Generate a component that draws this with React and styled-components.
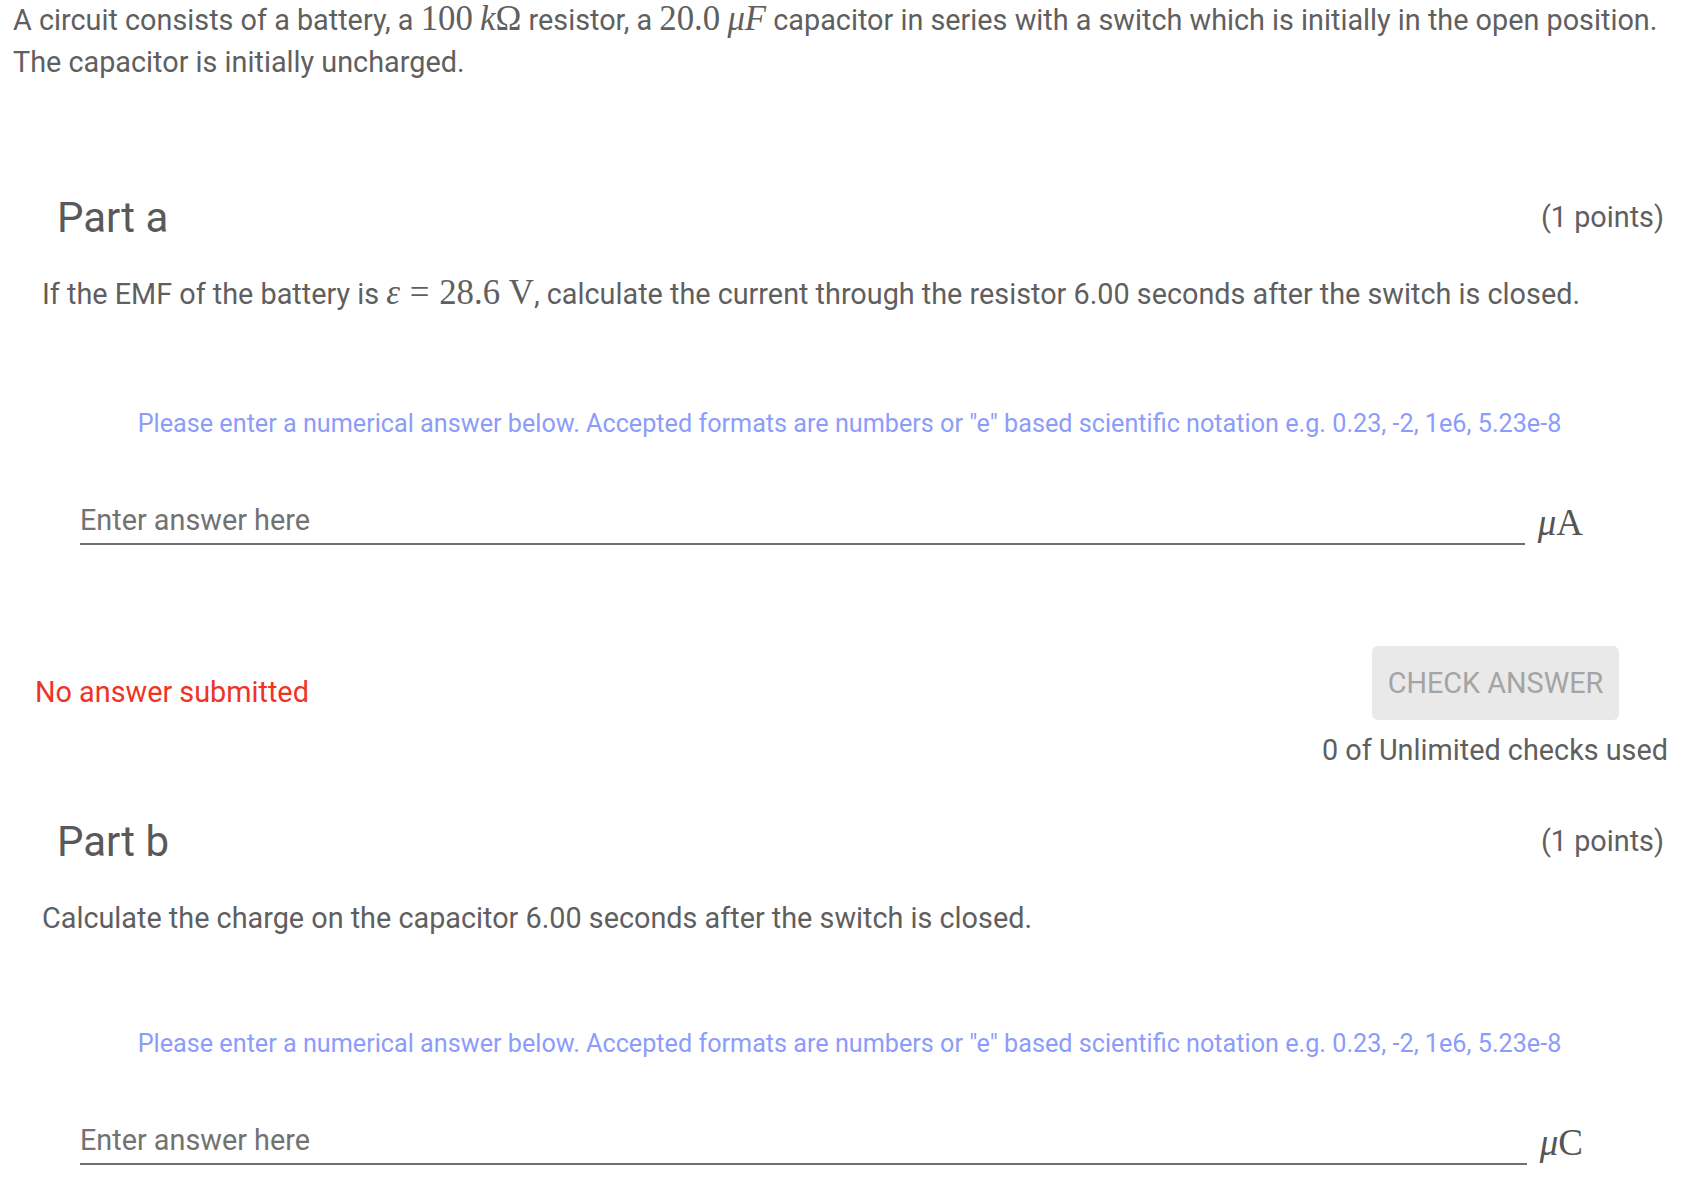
import React from 'react';
import styled, { createGlobalStyle } from 'styled-components';

const GlobalStyle = createGlobalStyle`
  html, body {
    margin: 0;
    padding: 0;
    background: #ffffff;
  }
  body {
    font-family: Roboto, 'Liberation Sans', sans-serif;
    color: #5f5f5f;
  }
`;

const Page = styled.div`
  padding: 0 0 0 13px;
  box-sizing: border-box;
  width: 1686px;
  min-height: 1202px;
`;

const Intro = styled.p`
  margin: -1px 0 0;
  font-size: 28.8px;
  line-height: 42px;
  white-space: nowrap;
`;

const Math = styled.span`
  font-family: 'Liberation Serif', 'DejaVu Serif', serif;
  font-size: 1.21em;
  line-height: 1;
  font-style: ${(p) => (p.$italic ? 'italic' : 'normal')};
`;

const Rel = styled.span`
  margin: 0 0.28em;
`;

const Part = styled.section`
  margin-top: ${(p) => p.$top}px;
`;

const PartHeader = styled.div`
  display: flex;
  justify-content: space-between;
  align-items: center;
  padding: 0 22px 0 44px;
  height: 50px;
`;

const PartTitle = styled.h2`
  margin: 0;
  font-size: 42px;
  font-weight: 400;
  color: #595959;
`;

const Points = styled.span`
  font-size: 28.8px;
  color: #5f5f5f;
`;

const Question = styled.p`
  margin: 31px 0 0;
  padding-left: 29px;
  font-size: 28.8px;
  line-height: 42px;
`;

const Hint = styled.p`
  margin: ${(p) => p.$gap}px 0 0;
  text-align: center;
  font-size: 25.2px;
  line-height: 34px;
  color: #8c9cfa;
`;

const AnswerRow = styled.div`
  display: flex;
  align-items: flex-end;
  gap: 13px;
  margin-top: 54px;
  padding: 0 103px 0 67px;
`;

const AnswerInput = styled.input`
  flex: 1;
  min-width: 0;
  border: none;
  border-bottom: 2px solid #6f6f6f;
  outline: none;
  background: transparent;
  padding: 8px 0 6px;
  font-family: Roboto, 'Liberation Sans', sans-serif;
  font-size: 28.8px;
  color: #5f5f5f;

  &::placeholder {
    color: #727272;
  }
`;

const Unit = styled.span`
  font-family: 'Liberation Serif', 'DejaVu Serif', serif;
  font-size: 37px;
  line-height: 1;
  color: #555555;
  padding-bottom: 4px;
`;

const SubmitRow = styled.div`
  display: flex;
  justify-content: space-between;
  align-items: center;
  margin-top: 101px;
  padding: 0 67px 0 22px;
`;

const Status = styled.span`
  font-size: 28.8px;
  color: #ef3325;
  margin-top: 18px;
`;

const CheckButton = styled.button`
  width: 247px;
  height: 74px;
  border: none;
  border-radius: 6px;
  background: #e9e9e9;
  color: #a4a4a4;
  font-family: Roboto, 'Liberation Sans', sans-serif;
  font-size: 28.8px;
  text-transform: uppercase;
  cursor: default;
`;

const ChecksUsed = styled.div`
  text-align: right;
  padding-right: 18px;
  margin-top: 9px;
  font-size: 28.8px;
  line-height: 42px;
  color: #5f5f5f;
`;

const hintText =
  'Please enter a numerical answer below. Accepted formats are numbers or "e" based scientific notation e.g. 0.23, -2, 1e6, 5.23e-8';

const PartBlock = ({ label, top, hintGap, question, unit, showSubmit }) => (
  <Part $top={top}>
    <PartHeader>
      <PartTitle>Part {label}</PartTitle>
      <Points>(1 points)</Points>
    </PartHeader>
    <Question>{question}</Question>
    <Hint $gap={hintGap}>{hintText}</Hint>
    <AnswerRow>
      <AnswerInput placeholder='Enter answer here' />
      <Unit>{unit}</Unit>
    </AnswerRow>
    {showSubmit && (
      <>
        <SubmitRow>
          <Status>No answer submitted</Status>
          <CheckButton disabled>Check Answer</CheckButton>
        </SubmitRow>
        <ChecksUsed>0 of Unlimited checks used</ChecksUsed>
      </>
    )}
  </Part>
);

const App = () => (
  <Page>
    <GlobalStyle />
    <Intro>
      A circuit consists of a battery, a <Math>100</Math>{' '}
      <Math $italic>k</Math>
      <Math>Ω</Math> resistor, a <Math>20.0</Math> <Math $italic>μF</Math>{' '}
      capacitor in series with a switch which is initially in the open
      position.
      <br />
      The capacitor is initially uncharged.
    </Intro>
    <PartBlock
      label='a'
      top={109}
      hintGap={92}
      showSubmit
      question={
        <>
          If the EMF of the battery is <Math $italic>ε</Math>
          <Math>
            <Rel>=</Rel>28.6 V
          </Math>
          , calculate the current through the resistor 6.00 seconds after the
          switch is closed.
        </>
      }
      unit={
        <>
          <i>μ</i>A
        </>
      }
    />
    <PartBlock
      label='b'
      top={45}
      hintGap={88}
      question='Calculate the charge on the capacitor 6.00 seconds after the switch is closed.'
      unit={
        <>
          <i>μ</i>C
        </>
      }
    />
  </Page>
);

export default App;
